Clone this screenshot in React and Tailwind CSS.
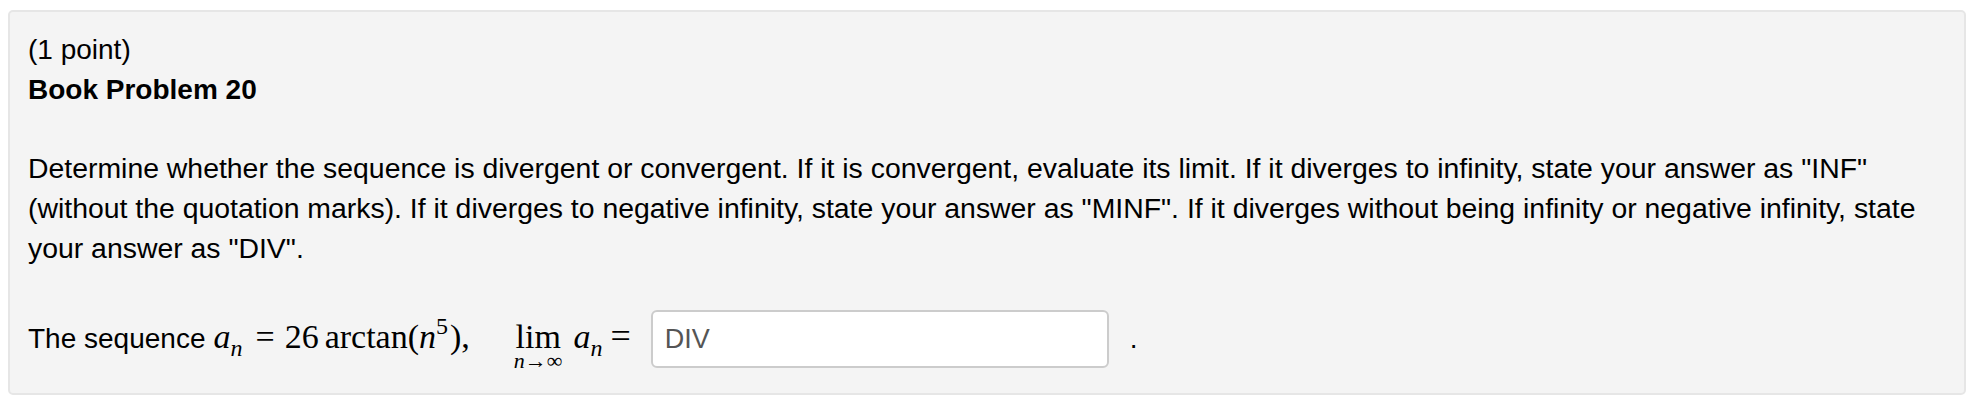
import React from 'react'

const SANS = "font-['Liberation_Sans','Helvetica','Arial',sans-serif]"
const SERIF = "font-['Liberation_Serif','Times_New_Roman',serif]"

function Sub({ children }) {
  return <span className="relative top-[8px] text-[24px] italic">{children}</span>
}

export default function App() {
  return (
    <div className="min-h-screen bg-white pt-[10px] pl-[8px] pr-[6px]">
      <div
        className={`rounded-[5px] border-2 border-[#e6e6e6] bg-[#f4f4f4] px-[18px] pt-[18px] pb-[22px] text-[28px] leading-[40px] text-black ${SANS}`}
      >
        <div>(1 point)</div>
        <div className="font-bold">Book Problem 20</div>

        <p className="mt-[38px] text-[28.4px]">
          Determine whether the sequence is divergent or convergent. If it is convergent, evaluate its limit. If it
          diverges to infinity, state your answer as "INF" (without the quotation marks). If it diverges to negative
          infinity, state your answer as "MINF". If it diverges without being infinity or negative infinity, state
          your answer as "DIV".
        </p>

        <div className="mt-[42px] flex items-baseline">
          <span>The sequence</span>
          <span className={`ml-[8px] text-[34px] leading-none ${SERIF}`}>
            <span className="italic">a</span>
            <Sub>n</Sub>
          </span>
          <span className={`ml-[13px] text-[34px] leading-none ${SERIF}`}>=</span>
          <span className={`ml-[10px] text-[34px] leading-none ${SERIF}`}>
            26<span className="ml-[6px]">arctan(</span>
            <span className="italic">n</span>
            <span className="relative -top-[14px] text-[24px]">5</span>
            <span className="ml-[2px]">),</span>
          </span>

          <span className={`ml-[44px] inline-flex flex-col items-center text-[34px] ${SERIF}`}>
            <span className="leading-[28px]">lim</span>
            <span className="text-[22px] italic leading-[20px]">
              n<span className="not-italic">→∞</span>
            </span>
          </span>
          <span className={`ml-[11px] text-[34px] leading-none ${SERIF}`}>
            <span className="italic">a</span>
            <Sub>n</Sub>
          </span>
          <span className={`ml-[8px] text-[36px] leading-none ${SERIF}`}>=</span>

          <input
            type="text"
            defaultValue="DIV"
            className="ml-[20px] h-[58px] w-[458px] rounded-[6px] border-2 border-[#cccccc] bg-white px-[12px] text-[27px] text-[#555555] outline-none"
          />
          <span className="ml-[21px]">.</span>
        </div>
      </div>
    </div>
  )
}
